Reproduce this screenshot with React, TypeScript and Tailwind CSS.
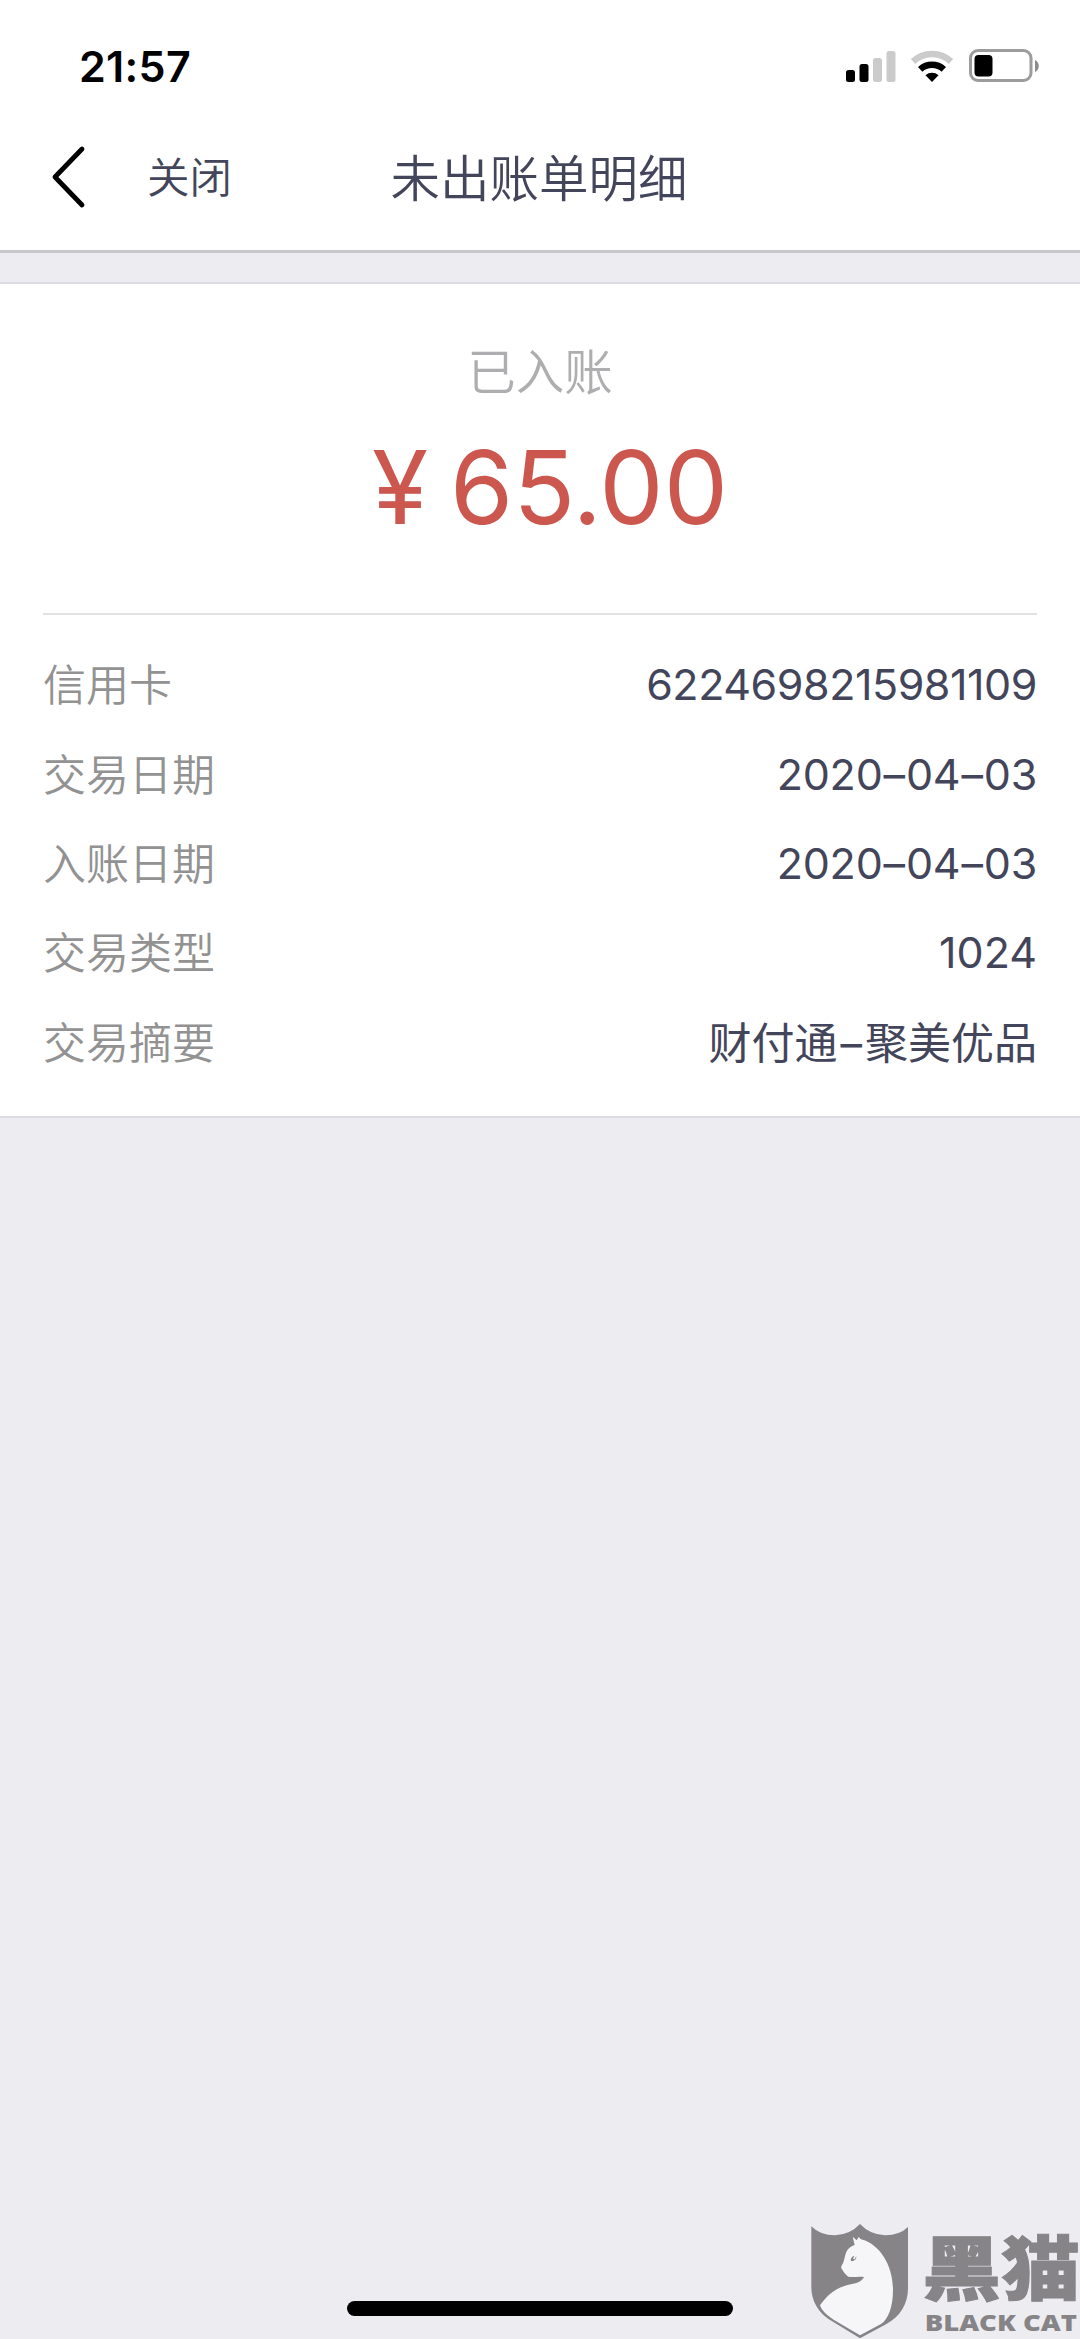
interface DetailRow {
  label: string;
  value: string;
  valueClass?: string;
  dashClass?: string;
}

const rows: DetailRow[] = [
  { label: '信用卡', value: '6224698215981109', valueClass: 'tracking-[-0.45px]' },
  { label: '交易日期', value: '2020–04–03', valueClass: 'tracking-[-0.2px]', dashClass: 'mx-[1px]' },
  { label: '入账日期', value: '2020–04–03', valueClass: 'tracking-[-0.2px]', dashClass: 'mx-[1px]' },
  { label: '交易类型', value: '1024' },
  { label: '交易摘要', value: '财付通–聚美优品', valueClass: 'pt-[2px]', dashClass: 'mx-[3px]' },
];

function StatusBar() {
  return (
    <div className="flex h-[132px] items-center justify-between pl-[79px] pr-[40px]">
      <span className="text-[43px] leading-none font-semibold tracking-[0.3px] text-black">21:57</span>
      <div className="flex items-center">
        {/* Signal */}
        <svg className="mr-[14px]" width="50" height="32" viewBox="0 0 50 32">
          <rect x="0" y="20" width="9" height="12" rx="2.5" fill="#000" />
          <rect x="13.5" y="14" width="9" height="18" rx="2.5" fill="#000" />
          <rect x="27" y="8" width="9" height="24" rx="2.5" fill="#cbcbcb" />
          <rect x="40.5" y="1" width="9" height="31" rx="2.5" fill="#cbcbcb" />
        </svg>
        {/* Wifi */}
        <svg className="mr-[15px]" width="44" height="32" viewBox="0 0 44 32">
          <path d="M3 11.5a28 28 0 0 1 38 0" fill="none" stroke="#cbcbcb" strokeWidth="6.5" />
          <path d="M10.2 19.3a17.5 17.5 0 0 1 23.6 0" fill="none" stroke="#000" strokeWidth="6.5" />
          <path d="M22 32l-6.5-6.8a10 10 0 0 1 13 0z" fill="#000" />
        </svg>
        {/* Battery */}
        <svg width="71" height="34" viewBox="0 0 71 34">
          <rect x="1.5" y="1.5" width="60.5" height="30" rx="7.5" fill="none" stroke="#9c9c9c" strokeWidth="3" />
          <rect x="5.5" y="6" width="18" height="21.5" rx="4" fill="#000" />
          <path d="M66 11c5 2 5 10 0 12z" fill="#8c8c8c" />
        </svg>
      </div>
    </div>
  );
}

function NavBar() {
  return (
    <div className="grid h-[90px] grid-cols-[1fr_auto_1fr] items-center">
      <div className="flex items-center">
        <svg className="ml-[50px]" width="38" height="64" viewBox="0 0 38 64">
          <path d="M32 4L5 32l27 28" fill="none" stroke="#000" strokeWidth="4.8" strokeLinecap="round" strokeLinejoin="round" />
        </svg>
        <span className="ml-[59px] pt-[3px] text-[42.5px] leading-none font-[350]">关闭</span>
      </div>
      <h1 className="mr-[2px] pt-[5px] text-[49.5px] leading-none font-[350]">未出账单明细</h1>
    </div>
  );
}

function Watermark() {
  return (
    <svg className="absolute right-0 bottom-0" width="300" height="139" viewBox="0 0 900 417">
      <path
        d="M94 79Q120 106 165 106Q210 104 240 72Q270 104 315 106Q360 105 384 81V265C384 310 362 350 318 373L240 415L160 366C112 340 94 300 94 262Z"
        fill="#868487"
      />
      <path
        d="M218 110L230 121L236 111L243 118C302 133 339 200 339 270C339 320 325 358 303 372L240 406L161 359C141 347 124 330 120 316C145 280 175 258 220 251C237 248 247 241 252 231C233 228 220 233 205 230C196 225 191 216 186 208C181 202 185 197 189 190C195 175 195 157 205 147C213 139 219 137 224 135Z"
        fill="#f6f6f8"
      />
      <path d="M212 180Q214 169 223 168L219 176L224 178L229 168Q230 182 214 184Z" fill="#868487" />
      <text
        x="427"
        y="284"
        textLength="473"
        lengthAdjust="spacingAndGlyphs"
        fill="#868487"
        stroke="#868487"
        strokeWidth="3"
        className="font-['Noto_Sans_CJK_SC',sans-serif] text-[212px] font-black"
      >
        黑猫
      </text>
      <text
        x="434"
        y="394"
        textLength="457"
        lengthAdjust="spacingAndGlyphs"
        fill="#868487"
        className="font-['Open_Sans',sans-serif] text-[68px] font-extrabold"
      >
        BLACK CAT
      </text>
    </svg>
  );
}

export default function App() {
  return (
    <div className="relative flex h-[2339px] w-[1080px] flex-col overflow-hidden bg-[#edecf1] font-[Inter,'Noto_Sans_CJK_SC',sans-serif] text-[#43455a]">
      <header className="h-[253px] border-b-[3px] border-[#c8c8cc] bg-white">
        <StatusBar />
        <NavBar />
      </header>

      <main className="mt-[29px] h-[836px] border-y-2 border-[#dcdce4] bg-white px-[43px]">
        <div className="flex h-[331px] flex-col items-center border-b-2 border-[#e2e2e2] pt-[63px]">
          <p className="text-[48.5px] leading-[52px] font-[350] text-[#aeaeb0]">已入账</p>
          <p className="mt-[37px] flex items-baseline pl-[20px] text-[102px] leading-[102px] text-[#cb574f]">
            <span className="mr-[22px]">¥</span>
            <span>65.00</span>
          </p>
        </div>

        <dl className="pt-[25px]">
          {rows.map((row) => (
            <div key={row.label} className="flex h-[89.4px] items-center justify-between text-[43px] leading-none">
              <dt className="pt-[2px] font-[350] text-[#929292]">{row.label}</dt>
              <dd className={row.valueClass}>
                {row.value.split('–').map((part, i) => (
                  <span key={i}>
                    {i > 0 && <span className={row.dashClass}>–</span>}
                    {part}
                  </span>
                ))}
              </dd>
            </div>
          ))}
        </dl>
      </main>

      <Watermark />

      {/* Home indicator */}
      <div className="mx-auto mt-auto mb-[23px] h-[15px] w-[386px] shrink-0 rounded-full bg-black" />
    </div>
  );
}
